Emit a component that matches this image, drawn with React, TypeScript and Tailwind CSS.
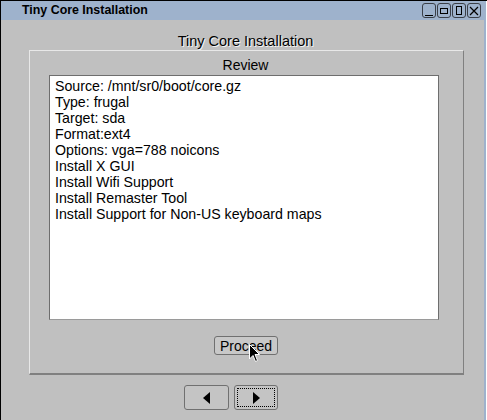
import React from "react";

const lines = [
  "Source: /mnt/sr0/boot/core.gz",
  "Type: frugal",
  "Target: sda",
  "Format:ext4",
  "Options: vga=788 noicons",
  "Install X GUI",
  "Install Wifi Support",
  "Install Remaster Tool",
  "Install Support for Non-US keyboard maps",
];

function WinBtn({ children }: { children: React.ReactNode }) {
  return (
    <div className="w-[14px] h-[15px] border border-[#3a3f48] rounded-[3px] flex items-center justify-center">
      {children}
    </div>
  );
}

export default function App() {
  const font = { fontFamily: '"Liberation Sans", Arial, sans-serif' };
  return (
    <div
      className="w-[487px] h-[420px] overflow-hidden bg-[#c0c0c0] border-l border-t border-black relative flex flex-col"
      style={font}
    >
      <div className="absolute right-0 top-0 bottom-0 w-[3px] flex">
        <div className="w-[2px] bg-[#9eb2cc]" />
        <div className="w-[1px] bg-white" />
      </div>
      {/* Title bar */}
      <div className="h-[19px] bg-[#9eb2cc] flex items-center pl-[21px] pr-[4px] shrink-0">
        <div className="text-[12.4px] font-bold text-black leading-none flex-1">Tiny Core Installation</div>
        <div className="flex gap-[1px] mr-[2px]">
          <WinBtn>
            <div className="w-[8px] h-[1px] bg-black mt-[9px]" />
          </WinBtn>
          <WinBtn>
            <div className="w-[8px] h-[6px] border border-black" />
          </WinBtn>
          <WinBtn>
            <div className="w-[6px] h-[9px] border border-black" />
          </WinBtn>
          <WinBtn>
            <svg width="10" height="10" viewBox="0 0 10 10">
              <path d="M1 1 L9 9 M9 1 L1 9" stroke="black" strokeWidth="1.2" />
            </svg>
          </WinBtn>
        </div>
      </div>
      {/* Body */}
      <div className="flex flex-col">
        <div className="h-[30px] flex items-end justify-center pb-[2px] ml-[3px]">
          <div
            className="text-[14.5px] text-black leading-none"
            style={{ textShadow: "1px 1px 0 #f4f4f4" }}
          >
            Tiny Core Installation
          </div>
        </div>
        <div className="ml-[28px] w-[435px] h-[325px] border-t border-l border-t-[#e8e8e8] border-l-[#e8e8e8] border-b-2 border-r border-b-[#808080] border-r-[#808080] flex flex-col">
          <div className="text-[14px] leading-none text-black text-center mt-[7px] ml-[-2px]">Review</div>
          <div className="ml-[19px] mt-[3px] w-[390px] h-[245px] bg-white border border-[#6e6e6e] border-b-[#9a9a9a] pl-[5px] pt-[2px]">
            {lines.map((l) => (
              <div key={l} className="text-[14.2px] leading-[16px] text-black whitespace-nowrap">
                {l}
              </div>
            ))}
          </div>
          <div className="flex justify-center mt-[16px] ml-[-1px]">
            <div className="relative w-[64px] h-[19px] rounded-[3px] border border-[#707070] bg-[#c8c8c8] flex items-center justify-center text-[14px] leading-none text-black">
              Proceed
              <svg className="absolute left-[34px] top-[7px]" width="12" height="19" viewBox="0 0 12 19">
                <path d="M0.5 0.5 L0.5 15 L4 11.5 L6.5 17.5 L8.5 16.5 L6 10.5 L10.5 10.5 Z" fill="black" stroke="white" strokeWidth="1" />
              </svg>
            </div>
          </div>
        </div>
        <div className="flex gap-[5px] mt-[10px] ml-[183px]">
          <div className="w-[45px] h-[25px] rounded-[3px] border border-[#707070] bg-[#c4c4c4] flex items-center justify-center">
            <svg width="7" height="12" viewBox="0 0 7 12">
              <path d="M7 0 L0 6 L7 12 Z" fill="black" />
            </svg>
          </div>
          <div className="w-[44px] h-[25px] rounded-[3px] border border-[#707070] bg-[#c4c4c4] flex items-center justify-center p-[2px]">
            <div className="w-full h-full border border-dotted border-black flex items-center justify-center">
              <svg width="7" height="12" viewBox="0 0 7 12">
                <path d="M0 0 L7 6 L0 12 Z" fill="black" />
              </svg>
            </div>
          </div>
        </div>
      </div>
    </div>
  );
}
